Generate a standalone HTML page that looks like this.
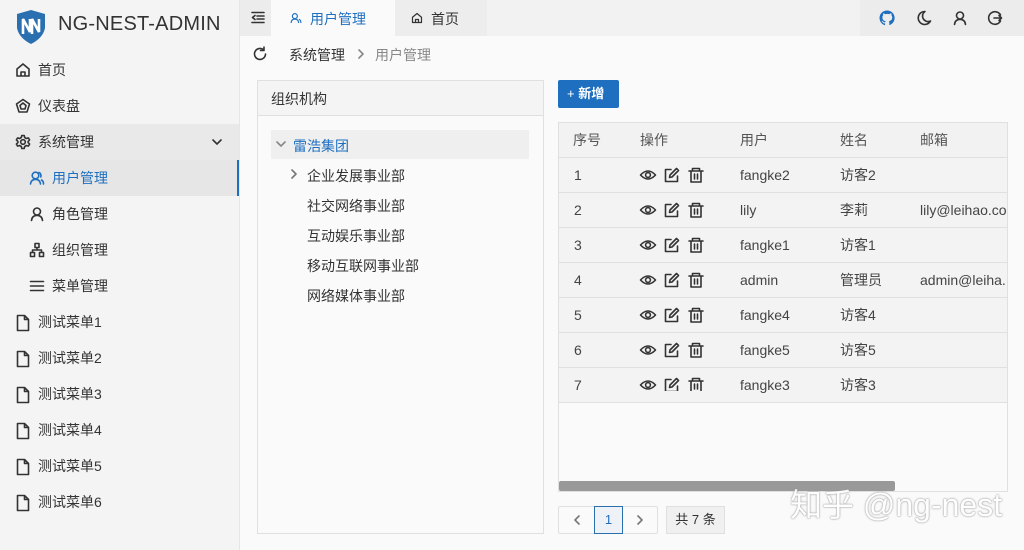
<!DOCTYPE html>
<html><head><meta charset="utf-8"><style>
*{box-sizing:border-box;margin:0;padding:0}
body{width:1024px;height:550px;overflow:hidden;background:#fafafa;font-family:"Liberation Sans","Noto Sans CJK SC",sans-serif;font-size:14px;color:#333;position:relative}
.abs{position:absolute}
.side{left:0;top:0;width:240px;height:550px;background:#f4f4f4;border-right:1px solid #e6e6e6}
.mi{position:absolute;left:0;width:239px;height:36px;line-height:36px;font-size:14px;color:#333}
.mi svg{position:absolute;top:10px}
.ic{fill:none;stroke:#333;stroke-width:1.6;stroke-linecap:round;stroke-linejoin:round}
.top{left:240px;top:0;width:784px;height:36px;background:#f2f2f2}
.row{position:absolute;left:559px;width:448px;height:35px;line-height:34px;background:#f3f3f3;border-bottom:1px solid #e0e0e0;font-size:14px;color:#444;overflow:hidden}
.row span{position:absolute;white-space:nowrap}
</style></head><body>
<div class="abs side">
  <svg class="abs" style="left:15px;top:10px" width="32" height="34" viewBox="0 0 32 34"><path d="M2 4 L16 0 L30 4 L30 18 Q28 28 16 34 Q4 28 2 18Z" fill="#2a6fb0"/><path d="M8 24 V9 L15 22 V9 M17 24 V9 L24 22 V9" stroke="#fff" stroke-width="2.6" fill="none"/></svg>
  <div class="abs" style="left:58px;top:13px;font-size:20px;color:#333;letter-spacing:0.2px">NG-NEST-ADMIN</div>
  <div class="mi" style="top:52px"><svg style="left:15px" width="16" height="16" viewBox="0 0 16 16"><path class="ic" d="M2 7 L8 2 L14 7 V14 H2Z M6 14 V10 H10 V14"/></svg><span style="position:absolute;left:38px">首页</span></div>
  <div class="mi" style="top:88px"><svg style="left:15px" width="16" height="16" viewBox="0 0 16 16"><path class="ic" d="M8 1.5 L14.5 6 L12 14 H4 L1.5 6Z M8 5 L11 7.5 L10 11 H6 L5 7.5Z"/></svg><span style="position:absolute;left:38px">仪表盘</span></div>
  <div class="mi" style="top:124px;background:#e9e9e9"><svg style="left:15px" width="16" height="16" viewBox="0 0 16 16"><circle class="ic" cx="8" cy="8" r="2.3"/><path class="ic" d="M6.8 1.5h2.4l.5 2 1.7 1 2-.6 1.2 2-1.5 1.5v1.2l1.5 1.5-1.2 2-2-.6-1.7 1-.5 2H6.8l-.5-2-1.7-1-2 .6-1.2-2 1.5-1.5V7.4L1.4 5.9l1.2-2 2 .6 1.7-1z"/></svg><span style="position:absolute;left:38px">系统管理</span><svg style="left:212px;top:14px" width="10" height="8" viewBox="0 0 10 8"><path class="ic" d="M1 2 L5 6 L9 2" stroke-width="1.3"/></svg></div>
  <div class="mi" style="top:160px;background:#e6e6e6;color:#1e6fc0;border-right:2px solid #1e6fc0"><svg style="left:29px" width="16" height="16" viewBox="0 0 16 16"><circle class="ic" style="stroke:#1e6fc0" cx="6.5" cy="5.5" r="3.3"/><path class="ic" style="stroke:#1e6fc0" d="M1.5 14 Q2 9.5 6.5 9.3 Q11 9.5 11.5 14 M10 2.5 Q12.5 3.5 11.8 7 M12.5 10 Q14.5 11 14.5 14"/></svg><span style="position:absolute;left:52px">用户管理</span></div>
  <div class="mi" style="top:196px"><svg style="left:29px" width="16" height="16" viewBox="0 0 16 16"><circle class="ic" cx="8" cy="5.5" r="3.5"/><path class="ic" d="M2.5 14.5 Q3 9.5 8 9.3 Q13 9.5 13.5 14.5"/></svg><span style="position:absolute;left:52px">角色管理</span></div>
  <div class="mi" style="top:232px"><svg style="left:29px" width="16" height="16" viewBox="0 0 16 16"><path class="ic" d="M6 1.5h4v4H6z M1.5 10.5h4v4h-4z M10.5 10.5h4v4h-4z M8 5.5v2.5 M3.5 10.5V8h9v2.5"/></svg><span style="position:absolute;left:52px">组织管理</span></div>
  <div class="mi" style="top:268px"><svg style="left:29px" width="16" height="16" viewBox="0 0 16 16"><path class="ic" d="M1.5 3.5h13 M1.5 8h13 M1.5 12.5h13"/></svg><span style="position:absolute;left:52px">菜单管理</span></div>
  <div class="mi" style="top:304px"><svg style="left:15px" width="16" height="18" viewBox="0 0 16 18"><path class="ic" d="M2.5 1.5h7l4 4v11h-11z M9.5 1.5v4h4"/></svg><span style="position:absolute;left:38px">测试菜单1</span></div>
  <div class="mi" style="top:340px"><svg style="left:15px" width="16" height="18" viewBox="0 0 16 18"><path class="ic" d="M2.5 1.5h7l4 4v11h-11z M9.5 1.5v4h4"/></svg><span style="position:absolute;left:38px">测试菜单2</span></div>
  <div class="mi" style="top:376px"><svg style="left:15px" width="16" height="18" viewBox="0 0 16 18"><path class="ic" d="M2.5 1.5h7l4 4v11h-11z M9.5 1.5v4h4"/></svg><span style="position:absolute;left:38px">测试菜单3</span></div>
  <div class="mi" style="top:412px"><svg style="left:15px" width="16" height="18" viewBox="0 0 16 18"><path class="ic" d="M2.5 1.5h7l4 4v11h-11z M9.5 1.5v4h4"/></svg><span style="position:absolute;left:38px">测试菜单4</span></div>
  <div class="mi" style="top:448px"><svg style="left:15px" width="16" height="18" viewBox="0 0 16 18"><path class="ic" d="M2.5 1.5h7l4 4v11h-11z M9.5 1.5v4h4"/></svg><span style="position:absolute;left:38px">测试菜单5</span></div>
  <div class="mi" style="top:484px"><svg style="left:15px" width="16" height="18" viewBox="0 0 16 18"><path class="ic" d="M2.5 1.5h7l4 4v11h-11z M9.5 1.5v4h4"/></svg><span style="position:absolute;left:38px">测试菜单6</span></div>
</div>

<div class="abs top">
  <div class="abs" style="left:0;top:0;width:36px;height:36px;background:#ececec"></div>
  <svg class="abs" style="left:11px;top:11px" width="14" height="13" viewBox="0 0 14 13"><path class="ic" stroke-width="1.4" d="M1 1.5h12 M6 5h7 M6 8h7 M1 11.5h12 M4 4.5 L1.5 6.5 L4 8.5"/></svg>
  <div class="abs" style="left:31px;top:0;width:124px;height:36px;background:#fafafa"></div>
  <svg class="abs" style="left:50px;top:12px" width="12" height="12" viewBox="0 0 16 16"><circle class="ic" style="stroke:#1e6fc0" cx="6.5" cy="5.5" r="3.3"/><path class="ic" style="stroke:#1e6fc0" d="M1.5 14 Q2 9.5 6.5 9.3 Q11 9.5 11.5 14 M12.5 10 Q14.5 11 14.5 14"/></svg>
  <div class="abs" style="left:70px;top:9px;color:#1e6fc0;font-size:14px">用户管理</div>
  <div class="abs" style="left:155px;top:0;width:92px;height:36px;background:#ededed"></div>
  <svg class="abs" style="left:171px;top:12px" width="12" height="12" viewBox="0 0 16 16"><path class="ic" d="M2 7 L8 2 L14 7 V14 H2Z M6 14 V10 H10 V14"/></svg>
  <div class="abs" style="left:191px;top:9px;font-size:14px">首页</div>
  <div class="abs" style="left:620px;top:0;width:164px;height:36px;background:#ececec"></div>
  <svg class="abs" style="left:639px;top:10px" width="16" height="16" viewBox="0 0 16 16"><path d="M8 .5a7.5 7.5 0 0 0-2.4 14.6c.4 0 .5-.2.5-.4v-1.4c-2.1.5-2.5-1-2.5-1-.3-.9-.8-1.1-.8-1.1-.7-.5.1-.5.1-.5.8 0 1.2.8 1.2.8.7 1.2 1.8.8 2.2.6 0-.5.3-.8.5-1-1.7-.2-3.4-.8-3.4-3.7 0-.8.3-1.5.8-2-.1-.2-.3-1 .1-2 0 0 .6-.2 2.1.8a7 7 0 0 1 3.8 0c1.4-1 2.1-.8 2.1-.8.4 1 .2 1.8.1 2 .5.5.8 1.2.8 2 0 2.9-1.8 3.5-3.4 3.7.3.2.5.7.5 1.4v2.1c0 .2.1.5.5.4A7.5 7.5 0 0 0 8 .5z" fill="#1e6fc0"/></svg>
  <svg class="abs" style="left:676px;top:10px" width="16" height="16" viewBox="0 0 16 16"><path class="ic" d="M9 1.5 A6.5 6.5 0 1 0 14.5 11 A5.5 5.5 0 0 1 9 1.5Z"/></svg>
  <svg class="abs" style="left:712px;top:10px" width="16" height="16" viewBox="0 0 16 16"><circle class="ic" cx="8" cy="5.5" r="3.5"/><path class="ic" d="M2.5 14.5 Q3 9.5 8 9.3 Q13 9.5 13.5 14.5"/></svg>
  <svg class="abs" style="left:747px;top:10px" width="16" height="16" viewBox="0 0 16 16"><path class="ic" d="M13.5 5 A6.3 6.3 0 1 0 13.5 11 M7 8h7.5 M12 5.5 L14.5 8 L12 10.5"/></svg>
</div>

<svg class="abs" style="left:252px;top:46px" width="16" height="16" viewBox="0 0 16 16"><path class="ic" d="M13.5 8 A5.5 5.5 0 1 1 11.5 3.7 M12 1 V4.5 H8.5" stroke-width="1.7"/></svg>
<div class="abs" style="left:289px;top:45px;font-size:14px;color:#333">系统管理</div>
<svg class="abs" style="left:357px;top:49px" width="8" height="10" viewBox="0 0 8 10"><path class="ic" style="stroke:#888" d="M2 1 L6 5 L2 9" stroke-width="1.2"/></svg>
<div class="abs" style="left:375px;top:45px;font-size:14px;color:#888">用户管理</div>

<div class="abs" style="left:257px;top:80px;width:287px;height:454px;border:1px solid #e0e0e0;background:#fafafa"></div>
<div class="abs" style="left:258px;top:81px;width:285px;height:35px;background:#f4f4f4;border-bottom:1px solid #e0e0e0"></div>
<div class="abs" style="left:271px;top:89px;font-size:14px">组织机构</div>
<div class="abs" style="left:271px;top:130px;width:258px;height:29px;background:#efefef"></div>
<svg class="abs" style="left:276px;top:140px" width="10" height="8" viewBox="0 0 10 8"><path class="ic" style="stroke:#888" d="M1 2 L5 6 L9 2" stroke-width="1.2"/></svg>
<div class="abs" style="left:293px;top:136px;color:#1e6fc0">雷浩集团</div>
<svg class="abs" style="left:290px;top:169px" width="8" height="10" viewBox="0 0 8 10"><path class="ic" style="stroke:#777" d="M2 1 L6 5 L2 9" stroke-width="1.2"/></svg>
<div class="abs" style="left:307px;top:166px">企业发展事业部</div>
<div class="abs" style="left:307px;top:196px">社交网络事业部</div>
<div class="abs" style="left:307px;top:226px">互动娱乐事业部</div>
<div class="abs" style="left:307px;top:256px">移动互联网事业部</div>
<div class="abs" style="left:307px;top:286px">网络媒体事业部</div>

<div class="abs" style="left:558px;top:80px;width:61px;height:28px;background:#1e6fc0;border-radius:2px;color:#fff;font-size:13px;line-height:28px;padding-left:9px">+ <b style="font-weight:bold">新增</b></div>

<div class="abs" style="left:558px;top:122px;width:450px;height:370px;border:1px solid #e0e0e0;background:#fafafa"></div>
<div class="row" style="top:123px;height:35px;line-height:34px;background:#f2f2f2;color:#555"><span style="left:14px">序号</span><span style="left:81px">操作</span><span style="left:181px">用户</span><span style="left:281px">姓名</span><span style="left:361px">邮箱</span></div>

<div class="row" style="top:158px"><span style="left:15px">1</span><span style="left:181px">fangke2</span><span style="left:281px">访客2</span></div>
<div class="row" style="top:193px"><span style="left:15px">2</span><span style="left:181px">lily</span><span style="left:281px">李莉</span><span style="left:361px">lily@leihao.com</span></div>
<div class="row" style="top:228px"><span style="left:15px">3</span><span style="left:181px">fangke1</span><span style="left:281px">访客1</span></div>
<div class="row" style="top:263px"><span style="left:15px">4</span><span style="left:181px">admin</span><span style="left:281px">管理员</span><span style="left:361px">admin@leiha...</span></div>
<div class="row" style="top:298px"><span style="left:15px">5</span><span style="left:181px">fangke4</span><span style="left:281px">访客4</span></div>
<div class="row" style="top:333px"><span style="left:15px">6</span><span style="left:181px">fangke5</span><span style="left:281px">访客5</span></div>
<div class="row" style="top:368px"><span style="left:15px">7</span><span style="left:181px">fangke3</span><span style="left:281px">访客3</span></div>
<svg class="abs" style="left:639px;top:166px" width="70" height="225" viewBox="0 0 70 225">
<defs><g id="ops"><path class="ic" d="M1.5 8 Q9 0 16.5 8 Q9 16 1.5 8Z"/><circle class="ic" cx="9" cy="8" r="2.4"/><path class="ic" d="M32 2.5h-5.5v12h12V9 M30.5 10.5l.5-2.5 6.5-6.5 2 2-6.5 6.5z"/><path class="ic" d="M50 4h14 M53.5 4V1.5h7V4 M52 4v11h10V4 M55.5 7v5 M58.5 7v5"/></g></defs>
<use href="#ops" y="1"/><use href="#ops" y="36"/><use href="#ops" y="71"/><use href="#ops" y="106"/><use href="#ops" y="141"/><use href="#ops" y="176"/><use href="#ops" y="211"/>
</svg>
<div class="abs" style="left:559px;top:481px;width:336px;height:10px;background:#999;border-radius:2px"></div>

<div class="abs" style="left:558px;top:506px;width:100px;height:28px;border:1px solid #e0e0e0;border-radius:2px;background:#fafafa"></div>
<svg class="abs" style="left:573px;top:515px" width="8" height="10" viewBox="0 0 8 10"><path class="ic" style="stroke:#777" d="M6 1 L2 5 L6 9" stroke-width="1.2"/></svg>
<div class="abs" style="left:594px;top:506px;width:29px;height:28px;border:1px solid #2a6fb0;background:#eef1f5;color:#1e6fc0;font-size:13px;text-align:center;line-height:26px">1</div>
<svg class="abs" style="left:636px;top:515px" width="8" height="10" viewBox="0 0 8 10"><path class="ic" style="stroke:#777" d="M2 1 L6 5 L2 9" stroke-width="1.2"/></svg>
<div class="abs" style="left:666px;top:506px;width:59px;height:28px;border:1px solid #e0e0e0;background:#f0f0f0;font-size:13px;text-align:center;line-height:26px">共 7 条</div>
<div class="abs" style="left:790px;top:480px;font-size:32px;color:#fff;opacity:.9;text-shadow:0 0 2px #999,0 0 1px #777;white-space:nowrap">知乎 @ng-nest</div>
</body></html>
